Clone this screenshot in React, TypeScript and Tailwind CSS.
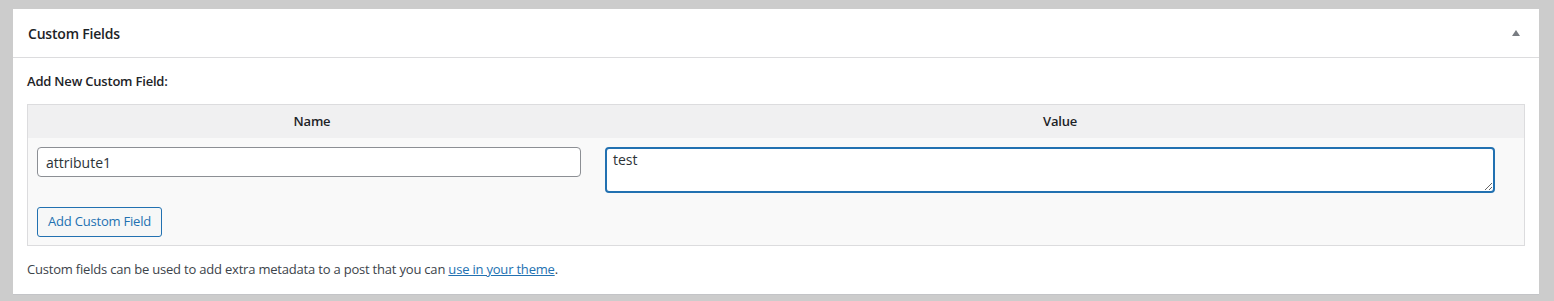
import React from "react";

const font = { fontFamily: '"Open Sans", "Noto Sans", sans-serif' };

export default function App() {
  return (
    <div className="min-h-[301px] bg-[#cccccc] pt-[9px] pl-[13px] pr-[15px] pb-[7px]" style={font}>
      <div className="bg-white border-b border-[#c3c4c7]">
        <div className="h-[49px] flex items-center justify-between pl-[15px] pr-[16px] border-b border-[#dcdcde]">
          <h2 className="text-[14px] font-semibold text-[#1d2327] tracking-[-0.2px]">Custom Fields</h2>
          <svg width="10" height="8" viewBox="0 0 10 8" className="mr-[2px]">
            <polygon points="5,1 9,7 1,7" fill="#787c82" />
          </svg>
        </div>
        <div className="pl-[14px] pr-[14px] pt-[14px] pb-[16px]">
          <p className="text-[13px] font-semibold text-[#1d2327] tracking-[-0.2px] leading-[18px]">Add New Custom Field:</p>
          <div className="mt-[14px] border border-[#dcdcde] bg-[#f9f9f9]">
            <div className="grid grid-cols-[568px_1fr] h-[33px] bg-[#f0f0f1] items-center text-[13px] font-semibold text-[#1d2327] tracking-[-0.2px]">
              <div className="text-center">Name</div>
              <div className="text-center">Value</div>
            </div>
            <div className="grid grid-cols-[568px_1fr] pt-[9px]">
              <div className="pl-[9px] pr-[15px]">
                <input
                  readOnly
                  value="attribute1"
                  className="w-full h-[30px] rounded-[4px] border border-[#8c8f94] bg-white px-[8px] text-[14px] text-[#2c3338] outline-none"
                  style={font}
                />
              </div>
              <div className="pl-[9px] pr-[29px]">
                <textarea
                  readOnly
                  value="test"
                  className="block w-full h-[46px] rounded-[4px] border-2 border-[#2271b1] bg-white px-[6px] pt-0 text-[14px] text-[#2c3338] outline-none"
                  style={font}
                />
              </div>
            </div>
            <div className="pl-[9px] pt-[14px] pb-[8px]">
              <button className="h-[30px] px-[10px] rounded-[3px] border border-[#2271b1] bg-[#f6f7f7] text-[13px] text-[#2271b1] tracking-[-0.2px]" style={font}>
                Add Custom Field
              </button>
            </div>
          </div>
          <p className="mt-[14px] text-[13px] text-[#3c434a] tracking-[-0.2px] leading-[18px]">
            Custom fields can be used to add extra metadata to a post that you can{" "}
            <a className="text-[#2271b1] underline" href="#">use in your theme</a>.
          </p>
        </div>
      </div>
    </div>
  );
}
